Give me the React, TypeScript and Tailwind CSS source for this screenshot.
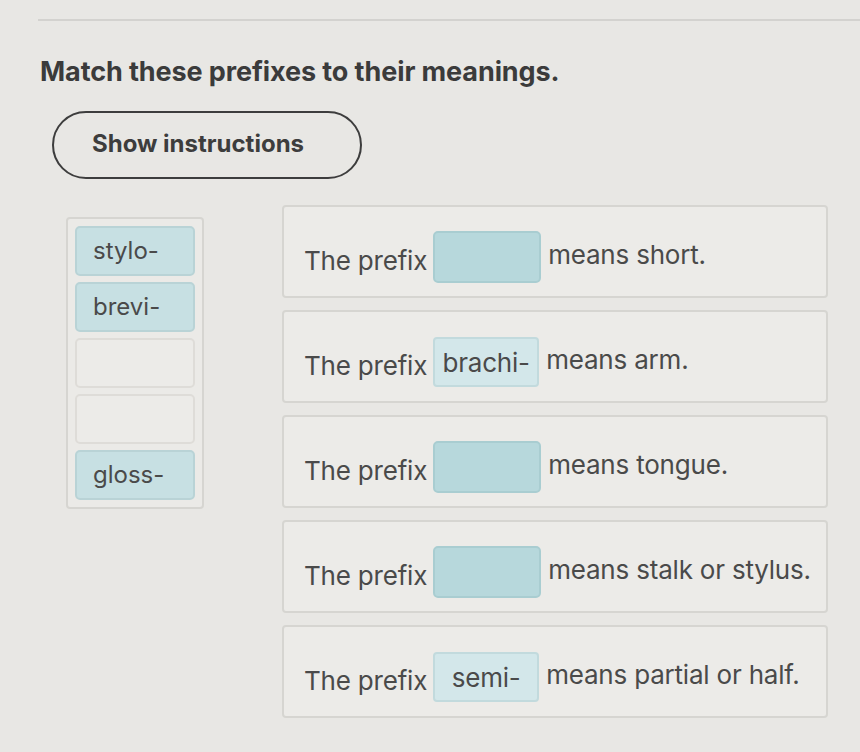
const bank: (string | null)[] = ["stylo-", "brevi-", null, null, "gloss-"];

const rows: { word: string | null; meaning: string }[] = [
  { word: null, meaning: "means short." },
  { word: "brachi-", meaning: "means arm." },
  { word: null, meaning: "means tongue." },
  { word: null, meaning: "means stalk or stylus." },
  { word: "semi-", meaning: "means partial or half." },
];

export default function App() {
  return (
    <div className="h-[752px] w-[860px] overflow-hidden bg-[#e8e7e4] font-['Inter',sans-serif] text-[#474747]">
      <div className="ml-[38px] pt-[19px]">
        <div className="h-[2px] bg-[#d3d2cf]" />
      </div>

      <h1 className="ml-[40px] mt-[31px] text-[27px] font-bold tracking-[-0.1px] text-[#3b3b3b]">
        Match these prefixes to their meanings.
      </h1>

      <button className="ml-[52px] mt-[18px] flex h-[68px] w-[310px] items-center justify-center rounded-full border-2 border-[#3d3d3d] pb-[2px] pr-[18px] text-[24px] font-bold text-[#3d3d3d]">
        Show instructions
      </button>

      <div className="mt-[26px] flex items-start">
        {/* word bank */}
        <div className="ml-[66px] mt-[12px] flex w-[138px] flex-col gap-[6px] rounded-[4px] border-2 border-[#d6d5d1] bg-[#ebeae7] p-[7px]">
          {bank.map((w, i) =>
            w ? (
              <div
                key={i}
                className="flex h-[50px] items-center rounded-[5px] border-2 border-[#b9d3d6] bg-[#c7e0e3] px-[16px] text-[24px] text-[#4a4a4a]"
              >
                {w}
              </div>
            ) : (
              <div
                key={i}
                className="h-[50px] rounded-[5px] border-2 border-[#dedcd8] bg-[#ecebe8]"
              />
            )
          )}
        </div>

        {/* sentences */}
        <div className="ml-[78px] flex w-[546px] flex-col gap-[12px]">
          {rows.map((r, i) => (
            <div
              key={i}
              className="flex h-[93px] items-center rounded-[4px] border-2 border-[#d6d5d1] bg-[#ecebe8] pl-[20px] pt-[12px] text-[26px] tracking-[-0.2px] text-[#4a4a4a]"
            >
              <span className="mt-[6px]">The prefix</span>
              {r.word ? (
                <div className="ml-[6px] flex h-[50px] w-[106px] items-center justify-center rounded-[4px] border-2 border-[#c2dadd] bg-[#d3e7ea]">
                  {r.word}
                </div>
              ) : (
                <div className="ml-[6px] h-[52px] w-[108px] rounded-[5px] border-2 border-[#a9cdd1] bg-[#b7d8dc]" />
              )}
              <span className="mb-[6px] ml-[7px]">{r.meaning}</span>
            </div>
          ))}
        </div>
      </div>
    </div>
  );
}
